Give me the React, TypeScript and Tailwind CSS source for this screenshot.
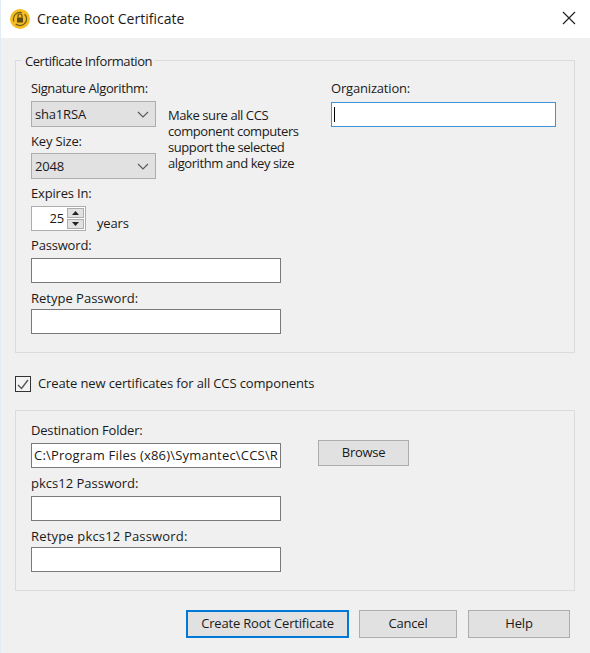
import React from "react";

function Label({ children, className = "" }: { children: React.ReactNode; className?: string }) {
  return <div className={`h-[16px] leading-[16px] text-[13px] text-[#1a1a1a] whitespace-nowrap ${className}`}>{children}</div>;
}

function Field({ value, className = "" }: { value?: string; className?: string }) {
  return (
    <div className={`w-[250px] h-[25px] bg-white border border-[#7a7a7a] px-[2px] leading-[23px] text-[13px] text-[#1a1a1a] overflow-hidden whitespace-nowrap ${className}`}>
      {value}
    </div>
  );
}

function Select({ value }: { value: string }) {
  return (
    <div className="w-[125px] h-[26px] bg-[#e1e1e1] border border-[#adadad] flex items-center justify-between pl-[3px] pr-[6px] text-[13px] text-[#1a1a1a]">
      <span className="mt-[2px]">{value}</span>
      <svg width="12" height="7" viewBox="0 0 12 7" fill="none" stroke="#5a5a5a" strokeWidth="1.2">
        <path d="M1 1l5 5 5-5" />
      </svg>
    </div>
  );
}

function Button({ children, className = "" }: { children: React.ReactNode; className?: string }) {
  return (
    <div className={`flex items-center justify-center bg-[#e1e1e1] text-[13px] text-[#1a1a1a] ${className}`}>
      {children}
    </div>
  );
}

export default function App() {
  return (
    <div className="w-[590px] h-[653px] bg-[#f0f0f0] flex flex-col overflow-hidden font-['Open_Sans','Noto_Sans',sans-serif] tracking-[-0.18px] border-l border-[#e3edf5]">
      <div className="h-[38px] bg-white flex items-center shrink-0 pl-[9px] pr-[14px]">
        <svg width="20" height="20" viewBox="0 0 20 20" className="shrink-0">
          <circle cx="10" cy="10" r="10" fill="#f5bd1f" />
          <circle cx="10" cy="10" r="6.6" fill="none" stroke="#6e5a1c" strokeWidth="1.2" strokeDasharray="15 3" />
          <rect x="7" y="8.5" width="6" height="5" rx="0.5" fill="#5b4a18" />
          <path d="M8 8.5V7a2 2 0 0 1 4 0v1.5" fill="none" stroke="#5b4a18" strokeWidth="1.1" />
        </svg>
        <div className="ml-[7px] mt-[-2px] text-[14px] tracking-normal text-[#1a1a1a] whitespace-nowrap">Create Root Certificate</div>
        <svg width="14" height="14" viewBox="0 0 14 14" className="ml-auto mt-[-2px]" fill="none" stroke="#222" strokeWidth="1.2">
          <path d="M1 1l12 12M13 1L1 13" />
        </svg>
      </div>

      <div className="relative ml-[14px] mt-[22px] w-[560px] h-[293px] shrink-0 border border-[#dcdcdc] pl-[15px] pt-[19px] flex">
        <div className="absolute left-[6px] top-[-8px] bg-[#f0f0f0] px-[3px] h-[16px] leading-[16px] text-[13px] tracking-[-0.44px] text-[#1a1a1a]">Certificate Information</div>
        <div className="w-[250px] shrink-0 flex flex-col">
          <div className="flex">
            <div className="w-[125px] shrink-0 flex flex-col">
              <Label className="tracking-[-0.38px]">Signature Algorithm:</Label>
              <div className="mt-[5px]"><Select value="sha1RSA" /></div>
              <Label className="mt-[6px]">Key Size:</Label>
              <div className="mt-[4px]"><Select value="2048" /></div>
            </div>
            <div className="ml-[12px] mt-[27px] text-[13px] leading-[16px] tracking-[-0.42px] text-[#1a1a1a] whitespace-nowrap">
              Make sure all CCS<br />component computers<br />support the selected<br />algorithm and key size
            </div>
          </div>
          <Label className="mt-[6px]">Expires In:</Label>
          <div className="mt-[5px] h-[25px] flex items-center">
            <div className="w-[55px] h-[25px] bg-white border border-[#adadad] flex items-center justify-between pr-[1px] text-[13px] text-[#1a1a1a]">
              <span className="ml-auto mr-[3px]">25</span>
              <div className="w-[17px] h-[21px] flex flex-col gap-[1px]">
                <div className="flex-1 bg-[#e1e1e1] border border-[#adadad] flex items-center justify-center">
                  <svg width="7" height="4" viewBox="0 0 7 4"><path d="M3.5 0L7 4H0z" fill="#222" /></svg>
                </div>
                <div className="flex-1 bg-[#e1e1e1] border border-[#adadad] flex items-center justify-center">
                  <svg width="7" height="4" viewBox="0 0 7 4"><path d="M3.5 4L7 0H0z" fill="#222" /></svg>
                </div>
              </div>
            </div>
            <span className="ml-[11px] mt-[8px] leading-[16px] text-[13px] text-[#1a1a1a]">years</span>
          </div>
          <Label className="mt-[6px]">Password:</Label>
          <Field className="mt-[5px]" />
          <Label className="mt-[7px] tracking-normal">Retype Password:</Label>
          <Field className="mt-[3px]" />
        </div>
        <div className="ml-[50px] w-[225px] shrink-0 flex flex-col">
          <Label>Organization:</Label>
          <div className="mt-[6px] w-[225px] h-[25px] bg-white border border-[#3f93d9] flex items-center pl-[2px]">
            <div className="w-[1px] h-[15px] bg-black" />
          </div>
        </div>
      </div>

      <div className="ml-[14px] mt-[23px] h-[16px] flex items-center shrink-0">
        <div className="w-[16px] h-[16px] border border-[#333] bg-[#f4f4f4] flex items-center justify-center">
          <svg width="12" height="11" viewBox="0 0 12 11" fill="none" stroke="#555" strokeWidth="1.4"><path d="M1 6l3.5 3.5L11 1" /></svg>
        </div>
        <span className="ml-[7px] text-[13px] tracking-[-0.13px] text-[#1a1a1a] whitespace-nowrap">Create new certificates for all CCS components</span>
      </div>

      <div className="ml-[14px] mt-[18px] w-[560px] h-[181px] shrink-0 border border-[#dcdcdc] pl-[15px] pt-[11px] flex items-start">
        <div className="w-[250px] flex flex-col shrink-0">
          <Label>Destination Folder:</Label>
          <Field className="mt-[5px] tracking-[0.2px]" value={"C:\\Program Files (x86)\\Symantec\\CCS\\R"} />
          <Label className="mt-[7px] tracking-normal">pkcs12 Password:</Label>
          <Field className="mt-[5px]" />
          <Label className="mt-[7px] tracking-[0.17px]">Retype pkcs12 Password:</Label>
          <Field className="mt-[3px]" />
        </div>
        <Button className="ml-[37px] mt-[18px] w-[91px] h-[26px] border border-[#adadad] tracking-[-0.3px]">Browse</Button>
      </div>

      <div className="flex mt-[19px] ml-[185px]">
        <Button className="w-[163px] h-[28px] border-2 border-[#0078d7]">Create Root Certificate</Button>
        <Button className="ml-[10px] w-[98px] h-[28px] border border-[#adadad]">Cancel</Button>
        <Button className="ml-[11px] w-[102px] h-[28px] border border-[#adadad]">Help</Button>
      </div>
    </div>
  );
}
